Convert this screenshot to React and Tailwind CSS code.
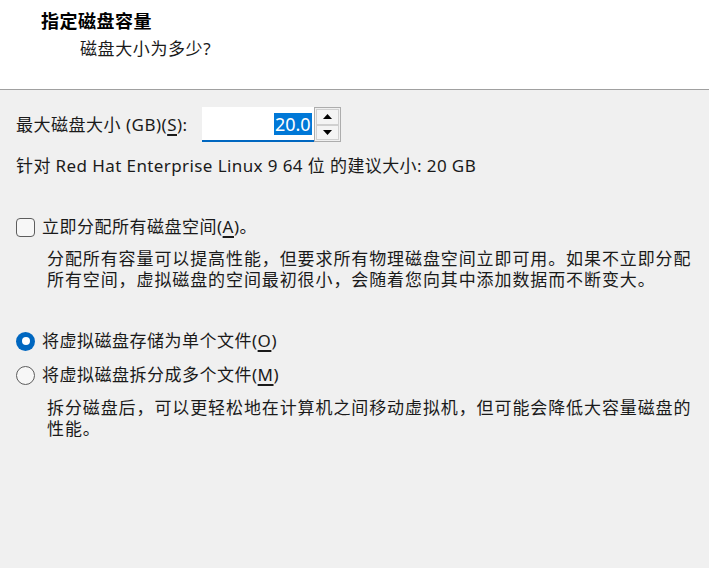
import React from "react";

const font = {
  fontFamily: '"Segoe UI", "Noto Sans", "Noto Sans CJK SC", sans-serif',
};

function Radio({ checked }) {
  return checked ? (
    <span className="flex h-[19px] w-[19px] shrink-0 items-center justify-center rounded-full bg-[#0067c0]">
      <span className="h-[8px] w-[8px] rounded-full bg-white" />
    </span>
  ) : (
    <span className="h-[19px] w-[19px] shrink-0 rounded-full border border-[#5d5d5d] bg-[#f7f7f7]" />
  );
}

function Key({ children }) {
  return <span className="underline decoration-[1.5px] underline-offset-[3px]">{children}</span>;
}

export default function App() {
  return (
    <div className="h-[568px] w-[709px] bg-[#f0f0f0] text-[17px] text-[#1a1a1a]" style={font}>
      <div className="h-[90px] border-b border-[#a0a0a0] bg-white pl-[41px] pt-[9px]">
        <div className="text-[18px] font-bold leading-[24px] tracking-[0.5px] text-black">指定磁盘容量</div>
        <div className="mt-[4px] pl-[39px] leading-[24px] tracking-[0.6px]">磁盘大小为多少?</div>
      </div>

      <div className="pl-[16px] pr-[14px]">
        <div className="mt-[17px] flex items-center">
          <span className="leading-[24px] tracking-[0.5px]">
            最大磁盘大小 (GB)(<Key>S</Key>):
          </span>
          <div className="ml-[14px] flex h-[35px]">
            <div className="flex w-[112px] items-center justify-end border-b-2 border-[#0067c0] bg-white pr-[2px]">
              <span className="bg-[#0078d7] px-[1px] text-[18px] leading-[22px] text-white">20.0</span>
            </div>
            <div className="flex w-[27px] flex-col border border-[#adadad] bg-[#f0f0f0] p-[1px]">
              <div className="flex flex-1 items-center justify-center border border-[#d0d0d0] bg-[#f4f4f4]">
                <svg width="9" height="5" viewBox="0 0 9 5"><path d="M4.5 0L9 5H0z" fill="#000" /></svg>
              </div>
              <div className="flex flex-1 items-center justify-center border border-[#d0d0d0] bg-[#f4f4f4]">
                <svg width="9" height="5" viewBox="0 0 9 5"><path d="M0 0H9L4.5 5z" fill="#000" /></svg>
              </div>
            </div>
          </div>
        </div>

        <div className="mt-[12px] leading-[24px] tracking-[0.4px]">
          针对 Red Hat Enterprise Linux 9 64 位 的建议大小: 20 GB
        </div>

        <div className="mt-[37px] flex items-center gap-[7px]">
          <span className="h-[19px] w-[19px] shrink-0 rounded-[4px] border border-[#5d5d5d] bg-[#f7f7f7]" />
          <span className="leading-[24px] tracking-[0.5px]">
            立即分配所有磁盘空间(<Key>A</Key>)。
          </span>
        </div>
        <div className="mt-[9px] pl-[31px] leading-[21px] tracking-[0.9px]">
          分配所有容量可以提高性能，但要求所有物理磁盘空间立即可用。如果不立即分配
          <br />
          所有空间，虚拟磁盘的空间最初很小，会随着您向其中添加数据而不断变大。
        </div>

        <div className="mt-[39px] flex items-center gap-[7px]">
          <Radio checked />
          <span className="leading-[24px] tracking-[0.5px]">
            将虚拟磁盘存储为单个文件(<Key>O</Key>)
          </span>
        </div>
        <div className="mt-[10px] flex items-center gap-[7px]">
          <Radio />
          <span className="leading-[24px] tracking-[0.5px]">
            将虚拟磁盘拆分成多个文件(<Key>M</Key>)
          </span>
        </div>
        <div className="mt-[10px] pl-[31px] leading-[21px] tracking-[0.9px]">
          拆分磁盘后，可以更轻松地在计算机之间移动虚拟机，但可能会降低大容量磁盘的
          <br />
          性能。
        </div>
      </div>
    </div>
  );
}
